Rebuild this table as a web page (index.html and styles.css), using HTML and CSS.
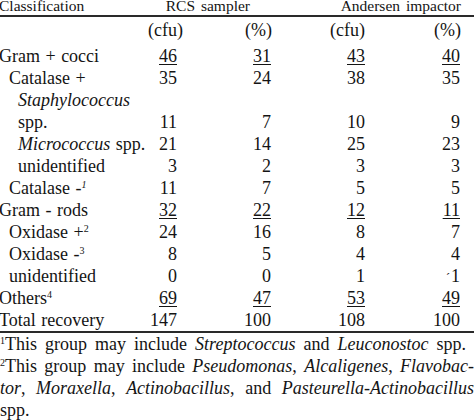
FILE: index.html
```html
<!DOCTYPE html>
<html>
<head>
<meta charset="utf-8">
<link rel="stylesheet" href="styles.css">
</head>
<body>
<div class="tbl">
  <div class="row head">
    <div class="c1">Classification</div>
    <div class="grp rcs">RCS sampler</div>
    <div class="grp and">Andersen impactor</div>
  </div>
  <div class="row units">
    <div class="c1"></div>
    <div class="u cfu1">(cfu)</div>
    <div class="u pct1">(%)</div>
    <div class="u cfu2">(cfu)</div>
    <div class="u pct2">(%)</div>
  </div>
  <div class="row">
    <div class="c1">Gram + cocci</div>
    <div class="n"><u>46</u></div><div class="n"><u>31</u></div><div class="n"><u>43</u></div><div class="n"><u>40</u></div>
  </div>
  <div class="row">
    <div class="c1 i1">Catalase +</div>
    <div class="n">35</div><div class="n">24</div><div class="n">38</div><div class="n">35</div>
  </div>
  <div class="row">
    <div class="c1 i2"><em>Staphylococcus</em></div>
    <div class="n"></div><div class="n"></div><div class="n"></div><div class="n"></div>
  </div>
  <div class="row">
    <div class="c1 i2">spp.</div>
    <div class="n">11</div><div class="n">7</div><div class="n">10</div><div class="n">9</div>
  </div>
  <div class="row">
    <div class="c1 i2"><em>Micrococcus</em> spp.</div>
    <div class="n">21</div><div class="n">14</div><div class="n">25</div><div class="n">23</div>
  </div>
  <div class="row">
    <div class="c1 i2">unidentified</div>
    <div class="n">3</div><div class="n">2</div><div class="n">3</div><div class="n">3</div>
  </div>
  <div class="row">
    <div class="c1 i1">Catalase -<sup><em>1</em></sup></div>
    <div class="n">11</div><div class="n">7</div><div class="n">5</div><div class="n">5</div>
  </div>
  <div class="row">
    <div class="c1">Gram - rods</div>
    <div class="n"><u>32</u></div><div class="n"><u>22</u></div><div class="n"><u>12</u></div><div class="n"><u>11</u></div>
  </div>
  <div class="row">
    <div class="c1 i1">Oxidase +<sup>2</sup></div>
    <div class="n">24</div><div class="n">16</div><div class="n">8</div><div class="n">7</div>
  </div>
  <div class="row">
    <div class="c1 i1">Oxidase -<sup>3</sup></div>
    <div class="n">8</div><div class="n">5</div><div class="n">4</div><div class="n">4</div>
  </div>
  <div class="row">
    <div class="c1 i1">unidentified</div>
    <div class="n">0</div><div class="n">0</div><div class="n">1</div><div class="n"><span class="tick">´</span>1</div>
  </div>
  <div class="row">
    <div class="c1">Others<sup>4</sup></div>
    <div class="n"><u>69</u></div><div class="n"><u>47</u></div><div class="n"><u>53</u></div><div class="n"><u>49</u></div>
  </div>
  <div class="row last">
    <div class="c1">Total recovery</div>
    <div class="n">147</div><div class="n">100</div><div class="n">108</div><div class="n">100</div>
  </div>
</div>
<div class="notes">
  <div class="ln j l1"><sup>1</sup>This group may include <em>Streptococcus</em> and <em>Leuconostoc</em> spp.</div>
  <div class="ln j"><sup>2</sup>This group may include <em>Pseudomonas</em>, <em>Alcaligenes</em>, <em>Flavobac-</em></div>
  <div class="ln j"><em>tor</em>, <em>Moraxella</em>, <em>Actinobacillus</em>, and <em>Pasteurella-Actinobacillus</em></div>
  <div class="ln">spp.</div>
</div>
</body>
</html>
```

FILE: styles.css
```css
html, body {
  margin: 0;
  padding: 0;
  background: #ffffff;
}
body {
  font-family: "Liberation Serif", "Times New Roman", serif;
  font-size: 18px;
  line-height: 22px;
  color: #141414;
  width: 474px;
  overflow: hidden;
}
.tbl {
  margin-top: -3px;
}
.row {
  display: grid;
  grid-template-columns: 148px 29px 94px 94px 95px 14px;
  height: 22px;
  white-space: nowrap;
}
.c1 {
  margin-left: -1px;
  word-spacing: 1px;
}
.i1 { padding-left: 10px; }
.i2 { padding-left: 19px; }
.n {
  text-align: right;
}
.n u {
  text-decoration-thickness: 1px;
  text-underline-offset: 2px;
}
.head {
  font-size: 15.5px;
  line-height: 18px;
  height: 18px;
  border-bottom: 2px solid #2a2a2a;
}
.grp {
  text-align: right;
}
.rcs {
  grid-column: 2 / 4;
  padding-right: 21px;
  word-spacing: 2px;
}
.and {
  grid-column: 4 / 6;
  margin-right: -1px;
  word-spacing: 2px;
}
.units {
  padding-top: 2px;
  padding-bottom: 4px;
  height: 22px;
}
.u { text-align: right; }
.cfu1 { margin-right: -5px; }
.cfu2 { margin-right: 0px; }
.pct1, .pct2 { margin-right: -1px; }
.last {
  border-bottom: 2px solid #2a2a2a;
}
sup {
  font-size: 10px;
  line-height: 0;
  vertical-align: 6px;
}
.tick {
  font-size: 12px;
  margin-right: 1px;
}
.notes {
  white-space: nowrap;
}
.ln {
  height: 22px;
}
.j {
  text-align: justify;
  text-align-last: justify;
}
.l1 {
  width: 466px;
}
```
